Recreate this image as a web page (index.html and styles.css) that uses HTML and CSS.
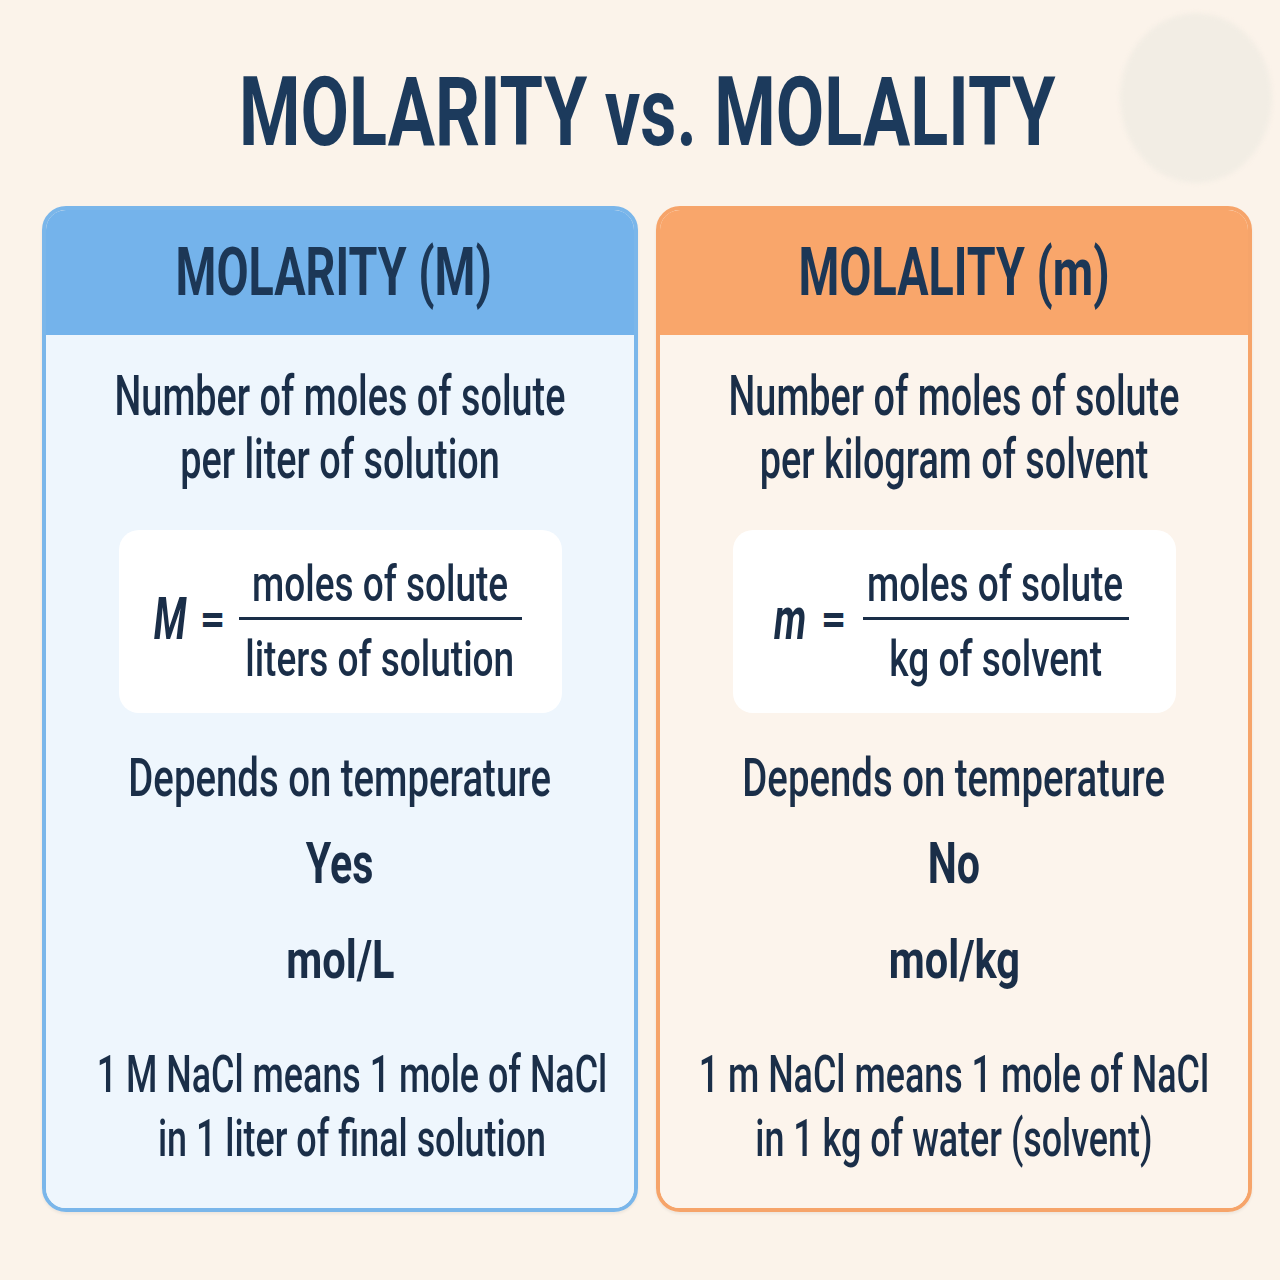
FILE: index.html
```html
<!DOCTYPE html>
<html lang="en">
<head>
<meta charset="utf-8">
<title>Molarity vs. Molality</title>
<link rel="stylesheet" href="styles.css">
</head>
<body>
<div class="page">
  <div class="blob"></div>
  <h1 class="title">MOLARITY vs. MOLALITY</h1>
  <div class="cards">
    <section class="card card-blue">
      <header class="card-head"><h2>MOLARITY (M)</h2></header>
      <div class="card-body">
        <p class="desc">Number of moles of solute<br>per liter of solution</p>
        <div class="formula">
          <span class="sym">M</span>
          <span class="eq">=</span>
          <span class="frac">
            <span class="num">moles of solute</span>
            <span class="bar"></span>
            <span class="den">liters of solution</span>
          </span>
        </div>
        <p class="label">Depends on temperature</p>
        <p class="answer">Yes</p>
        <p class="unit">mol/L</p>
        <p class="note">1 M NaCl means 1 mole of NaCl<br>in 1 liter of final solution</p>
      </div>
    </section>
    <section class="card card-orange">
      <header class="card-head"><h2>MOLALITY (m)</h2></header>
      <div class="card-body">
        <p class="desc">Number of moles of solute<br>per kilogram of solvent</p>
        <div class="formula">
          <span class="sym">m</span>
          <span class="eq">=</span>
          <span class="frac">
            <span class="num">moles of solute</span>
            <span class="bar"></span>
            <span class="den">kg of solvent</span>
          </span>
        </div>
        <p class="label">Depends on temperature</p>
        <p class="answer">No</p>
        <p class="unit">mol/kg</p>
        <p class="note">1 m NaCl means 1 mole of NaCl<br>in 1 kg of water (solvent)</p>
      </div>
    </section>
  </div>
</div>
</body>
</html>
```
FILE: styles.css
```css
* { box-sizing: border-box; }
html, body { margin: 0; padding: 0; }
body {
  background: #fbf3ea;
  font-family: Roboto, "Liberation Sans", sans-serif;
  color: #1a2e48;
}
.page {
  position: relative;
  width: 1280px;
  height: 1280px;
  overflow: hidden;
}
.blob {
  position: absolute;
  left: 1120px;
  top: 13px;
  width: 152px;
  height: 170px;
  border-radius: 50%;
  background: #f2ede4;
  filter: blur(2px);
}
.title {
  position: relative;
  margin: 0;
  height: 206px;
  padding: 57px 0 0 20px;
  text-align: center;
  font-size: 97px;
  line-height: 110px;
  font-weight: 700;
  white-space: nowrap;
  color: #1c3a5c;
  transform: scaleX(0.725);
}
.cards {
  display: grid;
  grid-template-columns: 596px 596px;
  gap: 18px;
  padding-left: 42px;
}
.card {
  height: 1006px;
  border: 4px solid;
  border-radius: 24px;
  overflow: hidden;
  display: flex;
  flex-direction: column;
  box-shadow: 0 2px 3px rgba(0, 0, 0, 0.06);
}
.card-blue { border-color: #7ab6ea; }
.card-orange { border-color: #f6a46a; }
.card-head {
  height: 125px;
  flex: none;
  display: flex;
  align-items: center;
  justify-content: center;
}
.card-blue .card-head { background: #74b3eb; }
.card-orange .card-head { background: #f9a66b; }
.card-head h2 {
  margin: 0;
  font-size: 66px;
  line-height: 80px;
  font-weight: 700;
  white-space: nowrap;
  color: #1c3756;
  transform: scaleX(0.707);
}
.card-blue .card-head h2 { margin-right: 12px; }
.card-body {
  flex: 1;
  display: flex;
  flex-direction: column;
  align-items: center;
  text-align: center;
  font-weight: 500;
}
.card-blue .card-body { background: #eef6fd; }
.card-orange .card-body { background: #fcf4ec; }
.card-body p {
  margin: 0;
  white-space: nowrap;
}
.desc {
  margin-top: 30px !important;
  font-size: 56px;
  line-height: 63px;
  transform: scaleX(0.675);
}
.formula {
  margin-top: 39px;
  width: 443px;
  height: 183px;
  flex: none;
  background: #ffffff;
  border-radius: 20px;
  display: flex;
  align-items: center;
}
.card-blue .formula { padding-left: 34px; }
.card-orange .formula { padding-left: 40px; }
.sym {
  width: 34px;
  display: flex;
  justify-content: center;
  font-style: italic;
  font-weight: 700;
  font-size: 59px;
  line-height: 70px;
  margin-bottom: 6px;
  transform: scaleX(0.65);
}
.eq {
  width: 20px;
  display: flex;
  justify-content: center;
  font-weight: 700;
  font-size: 44px;
  line-height: 50px;
  margin-bottom: 6px;
}
.card-blue .eq { margin-left: 16px; }
.card-orange .eq { margin-left: 17px; }
.frac {
  display: flex;
  flex-direction: column;
  align-items: center;
}
.card-blue .frac { margin-left: 16px; width: 283px; }
.card-orange .frac { margin-left: 19px; width: 266px; }
.num, .den {
  display: block;
  white-space: nowrap;
  font-size: 50px;
  line-height: 50px;
  transform: scaleX(0.74);
}
.num { margin-bottom: 8px; }
.bar {
  display: block;
  align-self: stretch;
  height: 3px;
  background: #1a2e48;
}
.den { margin-top: 14px; }
.label {
  margin-top: 33px !important;
  font-size: 54px;
  line-height: 64px;
  transform: scaleX(0.71);
}
.answer {
  margin-top: 21px !important;
  font-size: 58px;
  line-height: 64px;
  font-weight: 700;
  transform: scaleX(0.71);
}
.unit {
  margin-top: 33px !important;
  font-size: 54px;
  line-height: 64px;
  font-weight: 700;
  transform: scaleX(0.77);
}
.note {
  margin-top: 51px !important;
  font-size: 52px;
  line-height: 64px;
  transform: scaleX(0.69);
}
.card-blue .note { margin-left: 24px; }
```
